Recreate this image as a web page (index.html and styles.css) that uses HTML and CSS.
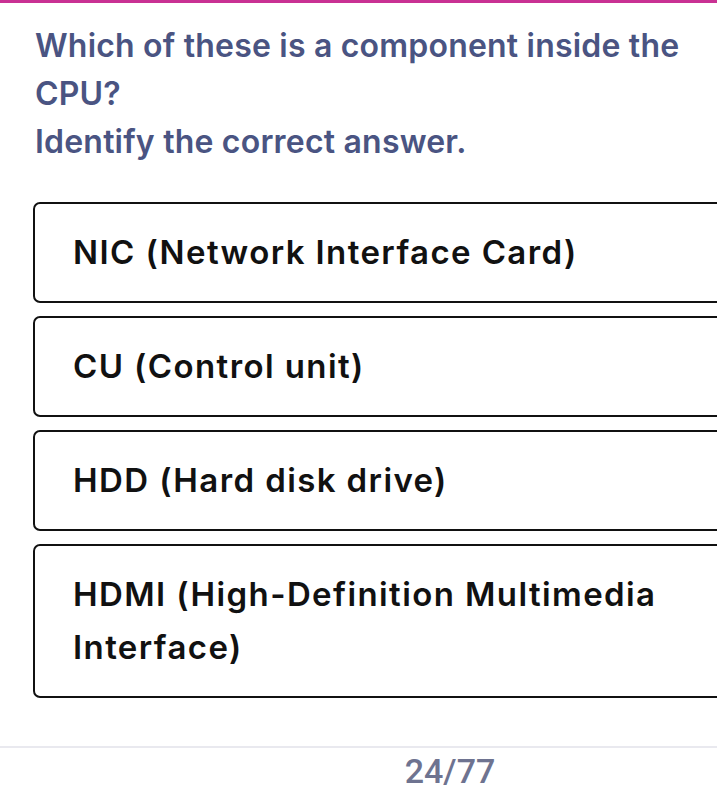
FILE: index.html
```html
<!DOCTYPE html>
<html lang="en">
<head>
<meta charset="utf-8">
<title>Quiz</title>
<link rel="stylesheet" href="styles.css">
</head>
<body>
<div class="page">
  <div class="topbar"></div>
  <main class="quiz">
    <h1 class="question">Which of these is a component inside the CPU?<br>Identify the correct answer.</h1>
    <ul class="options">
      <li class="option">NIC (Network Interface Card)</li>
      <li class="option">CU (Control unit)</li>
      <li class="option">HDD (Hard disk drive)</li>
      <li class="option option-wrap">HDMI (High-Definition Multimedia Interface)</li>
    </ul>
  </main>
  <footer class="footer">
    <div class="progress">24/77</div>
  </footer>
</div>
</body>
</html>
```

FILE: styles.css
```css
html, body {
  margin: 0;
  padding: 0;
  background: #ffffff;
  overflow: hidden;
}

.page {
  width: 900px;
  font-family: Inter, "Noto Sans", sans-serif;
}

.topbar {
  height: 3px;
  background: #c93193;
}

.quiz {
  padding: 19px 33px 0 35px;
}

.question {
  margin: 0;
  font-size: 32px;
  line-height: 48px;
  font-weight: 600;
  letter-spacing: 0.2px;
  color: #4a5482;
  width: 665px;
}

.options {
  list-style: none;
  margin: 36px 0 0 -2px;
  padding: 0;
  display: flex;
  flex-direction: column;
  gap: 13px;
}

.option {
  border: 2px solid #111111;
  border-radius: 7px;
  padding: 22px 40px 22px 38px;
  font-size: 33px;
  line-height: 53px;
  font-weight: 600;
  letter-spacing: 1.4px;
  color: #111111;
}

.option-wrap {
  padding-right: 200px;
}

.footer {
  margin-top: 48px;
  border-top: 2px solid #e9e9ef;
  display: flex;
  justify-content: center;
  padding-top: 8px;
}

.progress {
  font-family: Roboto, "Liberation Sans", sans-serif;
  font-size: 34px;
  font-weight: 500;
  line-height: 30px;
  color: #6e7390;
}
```
